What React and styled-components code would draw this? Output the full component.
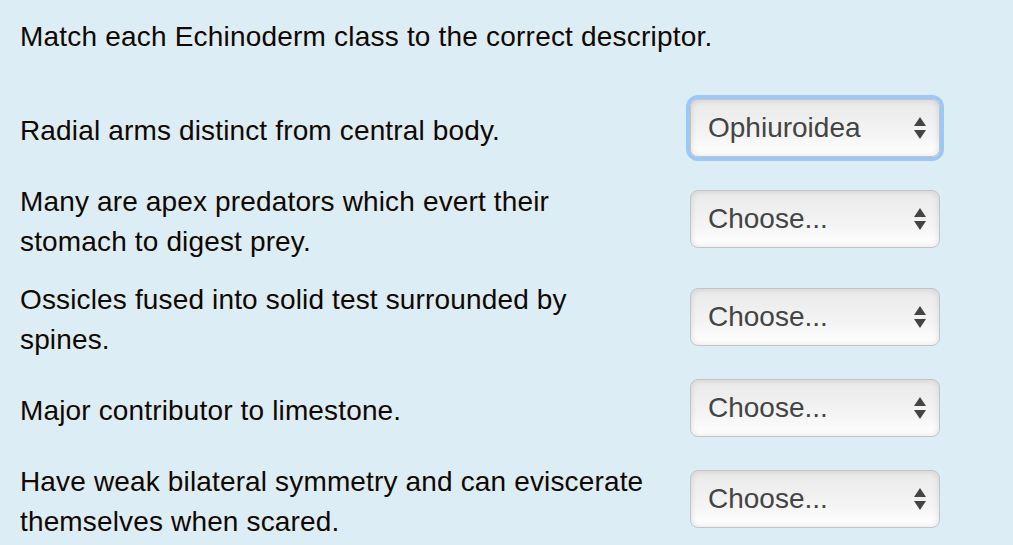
import React from 'react'
import styled, { createGlobalStyle } from 'styled-components'

const Global = createGlobalStyle`
  html, body {
    margin: 0;
    padding: 0;
    background: #ddedf6;
  }
  body {
    font-family: "Liberation Sans", Arial, Helvetica, sans-serif;
    color: #110800;
  }
`

const Page = styled.div`
  padding: 17px 20px 0 20px;
  height: 545px;
  box-sizing: border-box;
  overflow: hidden;
`

const Title = styled.div`
  font-size: 28px;
  line-height: 40px;
  letter-spacing: 0.2px;
  margin-bottom: 29px;
`

const Row = styled.div`
  display: flex;
  align-items: center;
  padding: 6px 0;
`

const Prompt = styled.div`
  width: 630px;
  padding-top: 6px;
  font-size: 28px;
  line-height: 40px;
  letter-spacing: 0.15px;
`

const SelectBox = styled.div`
  margin: 7px 0 7px 40px;
  width: 250px;
  height: 58px;
  box-sizing: border-box;
  border: 1px solid #c4c4c4;
  border-radius: 8px;
  background: linear-gradient(#e9e9e9, #f4f4f4 60%, #ffffff);
  box-shadow: inset 0 0 6px rgba(0, 0, 0, 0.12), ${p => p.focused ? '0 0 0 4px #9cc7f7' : '0 0 0 0 transparent'};
  display: flex;
  align-items: center;
  justify-content: space-between;
  padding: 0 12px 0 17px;
  font-size: 28px;
  color: #444;
`

const Arrows = styled.svg`
  width: 14px;
  height: 30px;
`

const rows = [
  { text: 'Radial arms distinct from central body.', value: 'Ophiuroidea', focused: true },
  { text: 'Many are apex predators which evert their stomach to digest prey.', value: 'Choose...' },
  { text: 'Ossicles fused into solid test surrounded by spines.', value: 'Choose...' },
  { text: 'Major contributor to limestone.', value: 'Choose...' },
  { text: 'Have weak bilateral symmetry and can eviscerate themselves when scared.', value: 'Choose...' },
]

function Select({ value, focused }) {
  return (
    <SelectBox focused={focused}>
      <span>{value}</span>
      <Arrows viewBox="0 0 14 30">
        <path d="M7 4 L13 13 L1 13 Z" fill="#444" />
        <path d="M1 17 L13 17 L7 26 Z" fill="#444" />
      </Arrows>
    </SelectBox>
  )
}

export default function App() {
  return (
    <Page>
      <Global />
      <Title>Match each Echinoderm class to the correct descriptor.</Title>
      {rows.map((r, i) => (
        <Row key={i}>
          <Prompt>{r.text}</Prompt>
          <Select value={r.value} focused={r.focused} />
        </Row>
      ))}
    </Page>
  )
}
